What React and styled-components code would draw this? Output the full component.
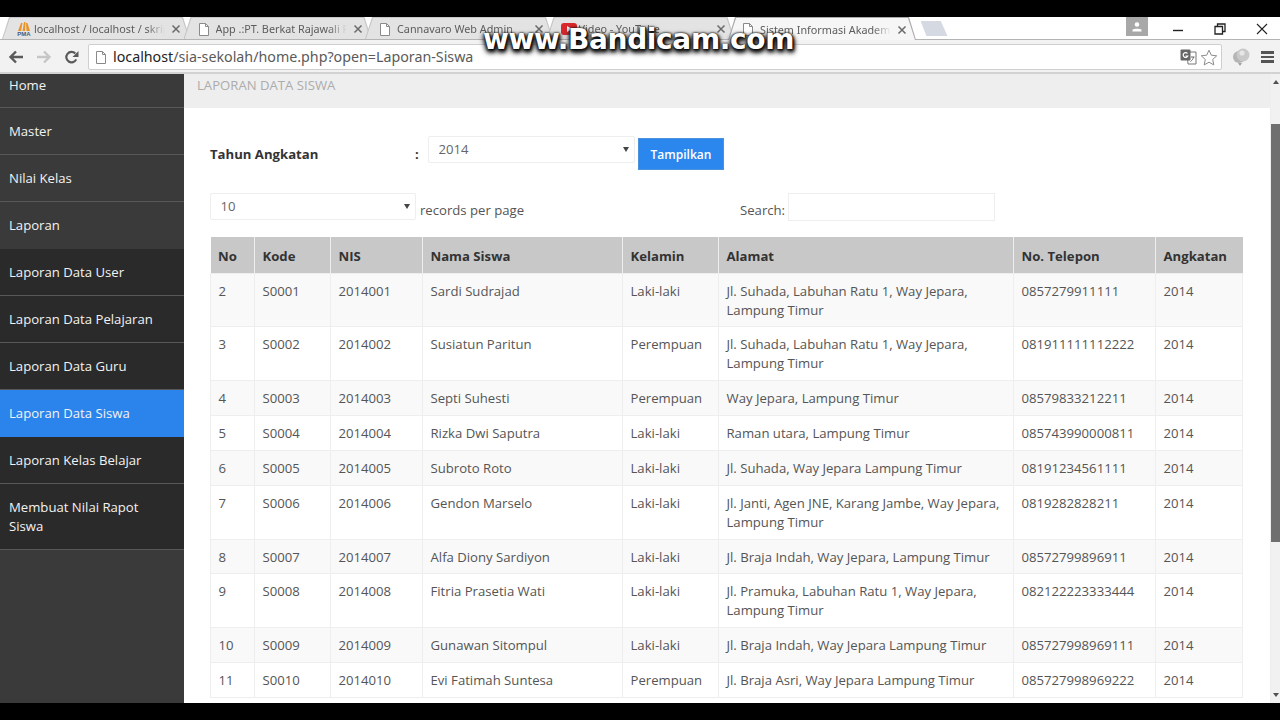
import React from 'react';
import styled, { createGlobalStyle } from 'styled-components';

const GlobalStyle = createGlobalStyle`
  html, body {
    margin: 0;
    padding: 0;
    height: 720px;
    overflow: hidden;
    background: #000;
    font-family: "Open Sans", "Noto Sans", sans-serif;
  }
  * { box-sizing: border-box; }
`;

const tabs = [
  { id: 1, title: 'localhost / localhost / skripsi', icon: 'pma' },
  { id: 2, title: 'App .:PT. Berkat Rajawali Perkasa', icon: 'page' },
  { id: 3, title: 'Cannavaro Web Admin', icon: 'page' },
  { id: 4, title: 'Video - YouTube', icon: 'yt' },
  { id: 5, title: 'Sistem Informasi Akademik', icon: 'page', active: true },
];

const menu = [
  { name: 'Home', first: true },
  { name: 'Master' },
  { name: 'Nilai Kelas' },
  { name: 'Laporan', open: true },
  { name: 'Laporan Data User', sub: true },
  { name: 'Laporan Data Pelajaran', sub: true },
  { name: 'Laporan Data Guru', sub: true },
  { name: 'Laporan Data Siswa', sub: true, active: true },
  { name: 'Laporan Kelas Belajar', sub: true },
  { name: 'Membuat Nilai Rapot Siswa', sub: true },
];

const columns = [
  { title: 'No', width: 44 },
  { title: 'Kode', width: 76 },
  { title: 'NIS', width: 92 },
  { title: 'Nama Siswa', width: 200 },
  { title: 'Kelamin', width: 96 },
  { title: 'Alamat', width: 295 },
  { title: 'No. Telepon', width: 142 },
  { title: 'Angkatan', width: 87 },
];

const students = [
  ['2', 'S0001', '2014001', 'Sardi Sudrajad', 'Laki-laki', 'Jl. Suhada, Labuhan Ratu 1, Way Jepara, Lampung Timur', '0857279911111', '2014'],
  ['3', 'S0002', '2014002', 'Susiatun Paritun', 'Perempuan', 'Jl. Suhada, Labuhan Ratu 1, Way Jepara, Lampung Timur', '081911111112222', '2014'],
  ['4', 'S0003', '2014003', 'Septi Suhesti', 'Perempuan', 'Way Jepara, Lampung Timur', '08579833212211', '2014'],
  ['5', 'S0004', '2014004', 'Rizka Dwi Saputra', 'Laki-laki', 'Raman utara, Lampung Timur', '085743990000811', '2014'],
  ['6', 'S0005', '2014005', 'Subroto Roto', 'Laki-laki', 'Jl. Suhada, Way Jepara Lampung Timur', '08191234561111', '2014'],
  ['7', 'S0006', '2014006', 'Gendon Marselo', 'Laki-laki', 'Jl. Janti, Agen JNE, Karang Jambe, Way Jepara, Lampung Timur', '0819282828211', '2014'],
  ['8', 'S0007', '2014007', 'Alfa Diony Sardiyon', 'Laki-laki', 'Jl. Braja Indah, Way Jepara, Lampung Timur', '08572799896911', '2014'],
  ['9', 'S0008', '2014008', 'Fitria Prasetia Wati', 'Laki-laki', 'Jl. Pramuka, Labuhan Ratu 1, Way Jepara, Lampung Timur', '082122223333444', '2014'],
  ['10', 'S0009', '2014009', 'Gunawan Sitompul', 'Laki-laki', 'Jl. Braja Indah, Way Jepara Lampung Timur', '085727998969111', '2014'],
  ['11', 'S0010', '2014010', 'Evi Fatimah Suntesa', 'Perempuan', 'Jl. Braja Asri, Way Jepara Lampung Timur', '085727998969222', '2014'],
];

function PageIcon() {
  return (
    <svg width="12" height="15" viewBox="0 0 12 15" fill="none" stroke="#8a8a8a" strokeWidth="1">
      <path d="M1.5 1.5h6l3 3v9h-9z" fill="#fff" />
      <path d="M7.5 1.5v3h3" />
    </svg>
  );
}

function PmaIcon() {
  return (
    <PmaBox>
      <svg width="16" height="9" viewBox="0 0 16 9">
        <path d="M2 9 5 1h1.5L5 9zM6.5 9 8 0h1.5L9 9zM10.5 9 10 1h1.5L14 9z" fill="#e8942a" />
      </svg>
      <PmaText>PMA</PmaText>
    </PmaBox>
  );
}

function YoutubeIcon() {
  return (
    <svg width="16" height="12" viewBox="0 0 16 12">
      <rect width="16" height="12" rx="3" fill="#d9282b" />
      <path d="M6 3l5 3-5 3z" fill="#fff" />
    </svg>
  );
}

function TabIcon({ type }) {
  if (type === 'pma') return <PmaIcon />;
  if (type === 'yt') return <YoutubeIcon />;
  return <PageIcon />;
}

export default function App() {
  return (
    <>
      <GlobalStyle />
      <Screen>
        <BlackBar />
        <TabStrip>
          {tabs.map((tab) => (
            <Tab key={tab.id} $active={tab.active}>
              <TabIconSlot><TabIcon type={tab.icon} /></TabIconSlot>
              <TabTitle>{tab.title}</TabTitle>
              <TabClose viewBox="0 0 10 10">
                <path d="M1.5 1.5l7 7M8.5 1.5l-7 7" />
              </TabClose>
            </Tab>
          ))}
          <NewTab />
          <WindowControls>
            <ProfileButton>
              <svg width="12" height="12" viewBox="0 0 12 12" fill="#fff">
                <circle cx="6" cy="3.5" r="2.3" />
                <path d="M1.5 10.5V8.7C3 7.3 9 7.3 10.5 8.7v1.8z" />
              </svg>
            </ProfileButton>
            <WindowButton>
              <svg width="12" height="12" viewBox="0 0 12 12" stroke="#222" fill="none">
                <path d="M1 7.5h10" strokeWidth="1.4" />
              </svg>
            </WindowButton>
            <WindowButton>
              <svg width="12" height="12" viewBox="0 0 12 12" stroke="#222" fill="none" strokeWidth="1.3">
                <path d="M1 3.5h7.5V11H1z" />
                <path d="M3.5 3.5V1H11v7.5H8.5" />
              </svg>
            </WindowButton>
            <WindowButton>
              <svg width="12" height="12" viewBox="0 0 12 12" stroke="#222" fill="none" strokeWidth="1.1">
                <path d="M1 1l10 10M11 1L1 11" />
              </svg>
            </WindowButton>
          </WindowControls>
          <Watermark>www.Bandicam.com</Watermark>
        </TabStrip>

        <Toolbar>
          <NavIcons>
            <svg width="16" height="14" viewBox="0 0 16 14" fill="none" stroke="#5a5a5a" strokeWidth="2.4">
              <path d="M15 7H3M8 1.5 2.5 7 8 12.5" />
            </svg>
            <svg width="16" height="14" viewBox="0 0 16 14" fill="none" stroke="#c6c6c6" strokeWidth="2.4">
              <path d="M1 7h12M8 1.5 13.5 7 8 12.5" />
            </svg>
            <svg width="15" height="15" viewBox="0 0 15 15" fill="none">
              <path d="M12.2 9.4A5.2 5.2 0 1 1 11.3 3.6" stroke="#5a5a5a" strokeWidth="2.2" />
              <path d="M14.5 1v6h-6z" fill="#5a5a5a" />
            </svg>
          </NavIcons>
          <Omnibox>
            <PageIcon />
            <Url><b>localhost</b>/sia-sekolah/home.php?open=Laporan-Siswa</Url>
            <OmniIcons>
              <svg width="17" height="16" viewBox="0 0 17 16">
                <path d="M7 3h9v12H8z" fill="#fff" stroke="#777" />
                <rect x="0.5" y="0.5" width="10" height="11" rx="1" fill="#666" />
                <path d="M7.5 4.5A2.4 2.4 0 1 0 7.8 7H5.6" fill="none" stroke="#fff" strokeWidth="1.2" />
                <path d="M11 8h3.5M13.5 8c-.3 2-1.5 3.5-3 4.5" fill="none" stroke="#666" />
              </svg>
              <svg width="18" height="17" viewBox="0 0 18 17" fill="#fff" stroke="#8c8c8c">
                <path d="M9 1.2l2.3 5 5.4.6-4 3.7 1.1 5.4L9 13.2 4.2 15.9l1.1-5.4-4-3.7 5.4-.6z" />
              </svg>
            </OmniIcons>
          </Omnibox>
          <ToolbarIcons>
            <svg width="20" height="20" viewBox="0 0 20 20">
              <circle cx="8" cy="10" r="6" fill="#b5b5b5" />
              <circle cx="12" cy="8" r="6.5" fill="#c9c9c9" />
              <circle cx="11" cy="6" r="2.6" fill="#e6e6e6" />
              <path d="M7 16l2 3 2-3z" fill="#a5a5a5" />
            </svg>
            <Hamburger><i /><i /><i /></Hamburger>
          </ToolbarIcons>
        </Toolbar>

        <Main>
          <Sidebar>
            {menu.map((item) => (
              <MenuItem
                key={item.name}
                $first={item.first}
                $sub={item.sub}
                $active={item.active}
                $open={item.open}
              >
                {item.name}
              </MenuItem>
            ))}
          </Sidebar>

          <Content>
            <PageHeading>LAPORAN DATA SISWA</PageHeading>
            <Card>
              <FilterRow>
                <FilterLabel>Tahun Angkatan</FilterLabel>
                <Colon>:</Colon>
                <SelectBox $width={207}>
                  <select defaultValue="2014">
                    <option>2014</option>
                  </select>
                </SelectBox>
                <PrimaryButton>Tampilkan</PrimaryButton>
              </FilterRow>

              <TableControls>
                <LengthControl>
                  <SelectBox $width={206}>
                    <select defaultValue="10">
                      <option>10</option>
                    </select>
                  </SelectBox>
                  <ControlText>records per page</ControlText>
                </LengthControl>
                <ControlText $flush>Search:</ControlText>
                <SearchInput type="text" />
              </TableControls>

              <DataTable>
                <colgroup>
                  {columns.map((col) => (
                    <col key={col.title} width={col.width} />
                  ))}
                </colgroup>
                <thead>
                  <tr>
                    {columns.map((col) => (
                      <th key={col.title}>{col.title}</th>
                    ))}
                  </tr>
                </thead>
                <tbody>
                  {students.map((row) => (
                    <tr key={row[1]}>
                      {row.map((value, i) => (
                        <td key={i}>{value}</td>
                      ))}
                    </tr>
                  ))}
                </tbody>
              </DataTable>
            </Card>
          </Content>

          <Scrollbar>
            <ScrollArrow $up />
            <ScrollThumb />
            <ScrollArrow />
          </Scrollbar>
        </Main>
        <BlackBar />
      </Screen>
    </>
  );
}

const Screen = styled.div`
  width: 1280px;
  height: 720px;
  display: flex;
  flex-direction: column;
  overflow: hidden;
  background: #000;
`;

const BlackBar = styled.div`
  height: 17px;
  flex: none;
  background: #000;
`;

const TabStrip = styled.div`
  position: relative;
  height: 23px;
  flex: none;
  display: flex;
  align-items: stretch;
  padding-left: 2px;
  background: #fff;
  border-bottom: 1px solid #b4b4b4;
`;

const Tab = styled.div`
  position: relative;
  z-index: ${({ $active }) => ($active ? 2 : 1)};
  width: 188px;
  height: ${({ $active }) => ($active ? '23px' : '22px')};
  margin-right: -6.5px;
  padding: 2px 9px 0 14px;
  display: flex;
  align-items: center;
  clip-path: polygon(0 100%, 7px 0, calc(100% - 7px) 0, 100% 100%);
  background: ${({ $active }) => ($active ? '#a9a9a9' : '#c6c6c6')};

  &::before {
    content: '';
    position: absolute;
    inset: 1px 1px 0 1px;
    clip-path: polygon(0 100%, 7px 0, calc(100% - 7px) 0, 100% 100%);
    background: ${({ $active }) => ($active ? '#f6f6f6' : '#e3e3e3')};
  }

  & > * { position: relative; }
`;

const TabIconSlot = styled.span`
  width: 18px;
  flex: none;
  display: flex;
  align-items: center;
`;

const PmaBox = styled.span`
  display: flex;
  flex-direction: column;
  align-items: center;
  width: 16px;
`;

const PmaText = styled.span`
  font: 700 6px/6px "Liberation Sans", sans-serif;
  color: #4a5a7a;
`;

const TabTitle = styled.span`
  flex: 1;
  min-width: 0;
  overflow: hidden;
  white-space: nowrap;
  font: 10.8px/16px "Noto Sans", sans-serif;
  color: #5c5c5c;
  -webkit-mask-image: linear-gradient(to right, #000 86%, transparent 100%);
  mask-image: linear-gradient(to right, #000 86%, transparent 100%);
`;

const TabClose = styled.svg`
  width: 10px;
  height: 10px;
  flex: none;
  margin-left: 6px;
  fill: none;
  stroke: #6a6a6a;
  stroke-width: 1.5;
`;

const NewTab = styled.div`
  width: 27px;
  height: 15px;
  margin: 4px 0 0 11px;
  flex: none;
  position: relative;
  z-index: 0;
  clip-path: polygon(0 0, 75% 0, 100% 100%, 22% 100%);
  background: #d5d9e2;
`;

const WindowControls = styled.div`
  margin-left: auto;
  margin-right: -3px;
  display: flex;
  align-items: flex-start;
`;

const ProfileButton = styled.div`
  width: 22px;
  height: 19px;
  margin-right: 9px;
  display: flex;
  align-items: center;
  justify-content: center;
  background: #a8a8a8;
`;

const WindowButton = styled.div`
  width: 42px;
  height: 24px;
  display: flex;
  align-items: center;
  justify-content: center;
`;

const Watermark = styled.div`
  position: absolute;
  z-index: 5;
  left: 483px;
  top: 7px;
  font: 700 28px/32px "DejaVu Sans", sans-serif;
  letter-spacing: -0.35px;
  white-space: nowrap;
  color: #fff;
  text-shadow: 0 0 2px #000, 1px 1px 3px #000, 2px 3px 4px #222, -1px 2px 4px #333, 0 3px 6px #333;
`;

const Toolbar = styled.div`
  height: 34px;
  flex: none;
  display: flex;
  align-items: center;
  padding: 2px 3px 0 8px;
  background: #f2f2f2;
  border-bottom: 2px solid #d2d2d2;
`;

const NavIcons = styled.div`
  width: 80px;
  flex: none;
  display: flex;
  align-items: center;
  gap: 12px;
`;

const Omnibox = styled.div`
  width: 1134px;
  height: 26px;
  flex: none;
  display: flex;
  align-items: center;
  padding: 0 3px 0 6px;
  background: #fff;
  border: 1px solid #cfcfcf;
  border-radius: 2px;
`;

const Url = styled.span`
  margin-left: 6px;
  font: 14.25px/20px "Noto Sans", sans-serif;
  color: #5a5a5a;
  white-space: nowrap;

  b {
    font-weight: 400;
    color: #222;
  }
`;

const OmniIcons = styled.div`
  margin-left: auto;
  display: flex;
  align-items: center;
  gap: 3px;
`;

const ToolbarIcons = styled.div`
  flex: 1;
  display: flex;
  align-items: center;
  justify-content: space-between;
  padding: 0 3px 0 9px;
`;

const Hamburger = styled.div`
  width: 13px;
  display: flex;
  flex-direction: column;
  gap: 2px;

  i {
    display: block;
    height: 2.5px;
    background: #555;
  }
`;

const Main = styled.div`
  flex: 1;
  min-height: 0;
  display: flex;
  background: #eee;
`;

const Sidebar = styled.nav`
  width: 184px;
  flex: none;
  background: #3a3a3a;
  overflow: hidden;
`;

const MenuItem = styled.div`
  padding: ${({ $first }) => ($first ? '2px 9px 12px' : '14px 9px 13px')};
  font-size: 13.15px;
  line-height: 19px;
  color: #f2f2f2;
  background: ${({ $active, $sub }) => ($active ? '#2a84ec' : $sub ? '#2a2a2a' : '#3a3a3a')};
  border-bottom: 1px solid ${({ $active, $open }) => ($active ? '#2a84ec' : $open ? '#3a3a3a' : '#585858')};
`;

const Content = styled.main`
  flex: 1;
  min-width: 0;
  display: flex;
  flex-direction: column;
  padding-right: 1px;
`;

const PageHeading = styled.h1`
  height: 34px;
  flex: none;
  margin: 0;
  padding: 2px 13px 0;
  font-size: 13.15px;
  font-weight: 400;
  line-height: 18px;
  color: #acacac;
`;

const Card = styled.section`
  flex: 1;
  min-height: 0;
  overflow: hidden;
  padding: 28px 26px 0;
  background: #fff;
`;

const FilterRow = styled.div`
  display: flex;
  align-items: flex-start;
`;

const FilterLabel = styled.div`
  width: 205px;
  margin-top: 9px;
  font-size: 13.15px;
  font-weight: 700;
  line-height: 19px;
  color: #333;
`;

const Colon = styled.div`
  width: 13px;
  margin-top: 9px;
  font-size: 13px;
  font-weight: 700;
  line-height: 19px;
  color: #333;
`;

const SelectBox = styled.div`
  position: relative;
  width: ${({ $width }) => $width}px;
  height: 27px;
  flex: none;

  select {
    width: 100%;
    height: 100%;
    padding: 0 0 1px 9.5px;
    appearance: none;
    background: #fff;
    border: 1px solid #eee;
    border-radius: 2px;
    outline: none;
    font: 13.15px "Open Sans", sans-serif;
    color: #666;
  }

  &::after {
    content: '';
    position: absolute;
    right: 6px;
    top: 11px;
    border-left: 3px solid transparent;
    border-right: 3px solid transparent;
    border-top: 5px solid #444;
  }
`;

const PrimaryButton = styled.button`
  width: 86px;
  height: 32px;
  margin: 2px 0 0 3px;
  padding: 1px 0 0;
  background: #2b87ee;
  border: 1px solid #4b93dd;
  font: 600 12px "Open Sans", sans-serif;
  color: #fff;
`;

const TableControls = styled.div`
  display: flex;
  align-items: flex-start;
  margin-top: 23px;
  margin-bottom: 16px;
`;

const LengthControl = styled.div`
  width: 530px;
  flex: none;
  display: flex;
  align-items: flex-start;
`;

const ControlText = styled.span`
  margin: 8px 0 0 ${({ $flush }) => ($flush ? '0' : '4px')};
  font-size: 13.15px;
  line-height: 19px;
  color: #555;
`;

const SearchInput = styled.input`
  width: 207px;
  height: 28px;
  margin-left: 3px;
  background: #fff;
  border: 1px solid #eee;
  outline: none;
`;

const DataTable = styled.table`
  width: 1032px;
  table-layout: fixed;
  border-collapse: collapse;
  font-size: 13.15px;
  line-height: 19px;

  th {
    height: 36px;
    padding: 3px 7.5px 0;
    text-align: left;
    font-weight: 700;
    color: #333;
    background: #c8c8c8;
    border-right: 1px solid #eee;
  }

  th:last-child { border-right: none; }

  td {
    padding: 8px 7.5px 6.85px;
    vertical-align: top;
    color: #555;
    border: 1px solid #eee;
  }

  tbody tr:nth-child(odd) td { background: #f9f9f9; }
`;

const Scrollbar = styled.div`
  width: 9px;
  flex: none;
  display: flex;
  flex-direction: column;
  background: #f1f1f1;
`;

const ScrollArrow = styled.div`
  width: 0;
  height: 0;
  margin: ${({ $up }) => ($up ? '6px 0 0 1.5px' : 'auto 0 6px 1.5px')};
  border-left: 3px solid transparent;
  border-right: 3px solid transparent;
  ${({ $up }) => ($up ? 'border-bottom: 4px solid #505050;' : 'border-top: 4px solid #505050;')}
`;

const ScrollThumb = styled.div`
  height: 418px;
  margin-top: 40px;
  flex: none;
  background: #6f6f6f;
`;
